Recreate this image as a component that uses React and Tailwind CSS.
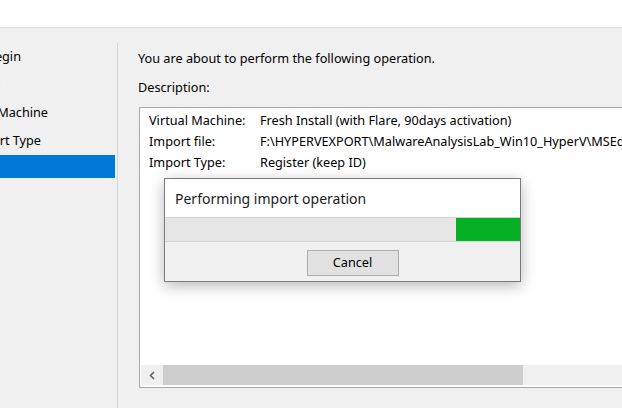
export default function App() {
  const rows = [
    ['Virtual Machine:', 'Fresh Install (with Flare, 90days activation)'],
    ['Import file:', 'F:\\HYPERVEXPORT\\MalwareAnalysisLab_Win10_HyperV\\MSEdge - Win10\\Virtual Machines'],
    ['Import Type:', 'Register (keep ID)'],
  ]

  return (
    <div
      className="relative w-[622px] h-[408px] overflow-hidden bg-[#f0f0f0] text-[12.7px] text-black"
      style={{ fontFamily: '"Noto Sans", "Open Sans", sans-serif' }}
    >
      {/* header strip */}
      <div className="h-[28px] bg-white border-b border-[#dfdfdf]" />

      <div className="flex h-[380px]">
        {/* left wizard steps, scrolled partly out of view */}
        <div className="w-[117px] shrink-0 overflow-hidden pt-[14.5px]">
          <div className="flex flex-col">
            <div className="h-[28px] flex items-center justify-end pr-[96px] whitespace-nowrap">Before You Begin</div>
            <div className="h-[28px] flex items-center justify-end pr-[118px] whitespace-nowrap">Locate Folder</div>
            <div className="h-[28px] flex items-center justify-end pr-[69px] whitespace-nowrap">Select Virtual Machine</div>
            <div className="h-[28px] flex items-center justify-end pr-[76px] whitespace-nowrap">Choose Import Type</div>
            <div className="h-[23px] w-[115px] bg-[#0078d7]" />
          </div>
        </div>

        <div className="w-px shrink-0 mt-[15px] bg-[#d5d5d5]" />

        {/* main page */}
        <div className="flex-1 pl-[20px] pt-[21px] min-w-0">
          <div className="h-[18px] leading-[18px] whitespace-nowrap">You are about to perform the following operation.</div>
          <div className="h-[18px] leading-[18px] mt-[11px] whitespace-nowrap">Description:</div>

          <div className="relative mt-[11px] ml-px w-[520px] h-[281px] bg-white border border-[#a9a9a9] border-r-0 flex flex-col">
            <div className="flex-1 pt-[2px] pl-[9px]">
              {rows.map(([k, v]) => (
                <div key={k} className="flex h-[21px] items-center whitespace-nowrap">
                  <span className="w-[111px] shrink-0">{k}</span>
                  <span>{v}</span>
                </div>
              ))}
            </div>
            {/* horizontal scrollbar */}
            <div className="flex h-[20px] mb-[2px] mx-px bg-[#f0f0f0]">
              <div className="w-[22px] flex items-center justify-center">
                <svg width="8" height="9" viewBox="0 0 8 9">
                  <path d="M6 1 L2.5 4.5 L6 8" fill="none" stroke="#606060" strokeWidth="1.6" />
                </svg>
              </div>
              <div className="w-[360px] bg-[#cdcdcd]" />
            </div>
          </div>
        </div>
      </div>

      {/* progress dialog */}
      <div className="absolute left-[164px] top-[178px] w-[357px] h-[104px] border border-[#7a7a7a] bg-[#f0f0f0] shadow-[0_4px_14px_rgba(0,0,0,0.28)] flex flex-col">
        <div className="h-[38px] bg-white flex items-center pl-[10px] text-[14px] text-[#1b1b1b] whitespace-nowrap">
          Performing import operation
        </div>
        <div className="h-[25px] bg-[#e6e6e6] border-t border-[#cfcfcf] border-b border-b-[#d6d6d6] flex">
          <div className="w-[291px]" />
          <div className="flex-1 bg-[#06b025]" />
        </div>
        <div className="flex-1 flex justify-center pt-[8px] pl-[20px]">
          <button className="w-[92px] h-[26px] bg-[#e1e1e1] border border-[#adadad] text-[12.7px] text-black">
            Cancel
          </button>
        </div>
      </div>
    </div>
  )
}
